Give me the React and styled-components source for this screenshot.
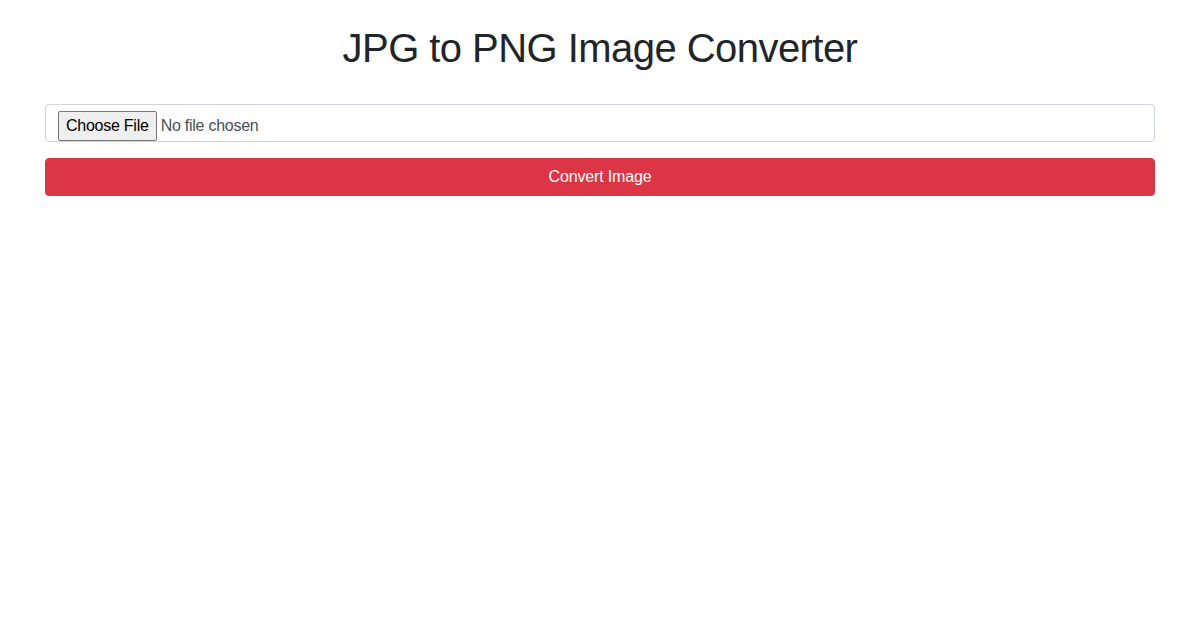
import React from "react";
import styled, { createGlobalStyle } from "styled-components";

const GlobalStyle = createGlobalStyle`
  *, *::before, *::after { box-sizing: border-box; }
  body {
    margin: 0;
    background: #fff;
    color: #212529;
    font-family: "Liberation Sans", Arial, sans-serif;
    font-size: 16px;
    line-height: 1.5;
  }
`;

const Container = styled.div`
  max-width: 1140px;
  margin: 24px auto 0;
  padding: 0 15px;
`;

const Title = styled.h1`
  margin: 0 0 32px;
  font-size: 40px;
  font-weight: 400;
  line-height: 1.2;
  letter-spacing: -0.55px;
  text-align: center;
  color: #212529;
`;

const Form = styled.form`
  display: flex;
  flex-direction: column;
  gap: 16px;
`;

const FileInput = styled.input`
  display: block;
  width: 100%;
  height: 38px;
  padding: 6px 12px;
  font-family: "Liberation Sans", Arial, sans-serif;
  font-size: 16px;
  line-height: 18px;
  letter-spacing: -0.25px;
  color: #495057;
  background: #fff;
  border: 1px solid #ced4da;
  border-radius: 4px;

  &::file-selector-button {
    font-family: "Liberation Sans", Arial, sans-serif;
    font-size: 16px;
    line-height: 18px;
    letter-spacing: -0.25px;
    color: #000;
    background: #efefef;
    border: 1px solid #767676;
    border-radius: 2px;
    height: 30px;
    padding: 5px 7px;
    margin: 0 4px 0 0;
  }
`;

const Button = styled.button`
  display: block;
  width: 100%;
  height: 38px;
  padding: 6px 12px;
  font-family: "Liberation Sans", Arial, sans-serif;
  font-size: 16px;
  line-height: 1.5;
  letter-spacing: -0.15px;
  color: #fff;
  background: #dc3545;
  border: 1px solid #dc3545;
  border-radius: 4px;
  cursor: pointer;
`;

export default function App() {
  return (
    <>
      <GlobalStyle />
      <Container>
        <Title>JPG to PNG Image Converter</Title>
        <Form onSubmit={(e) => e.preventDefault()}>
          <FileInput type="file" accept="image/jpeg" />
          <Button type="submit">Convert Image</Button>
        </Form>
      </Container>
    </>
  );
}
